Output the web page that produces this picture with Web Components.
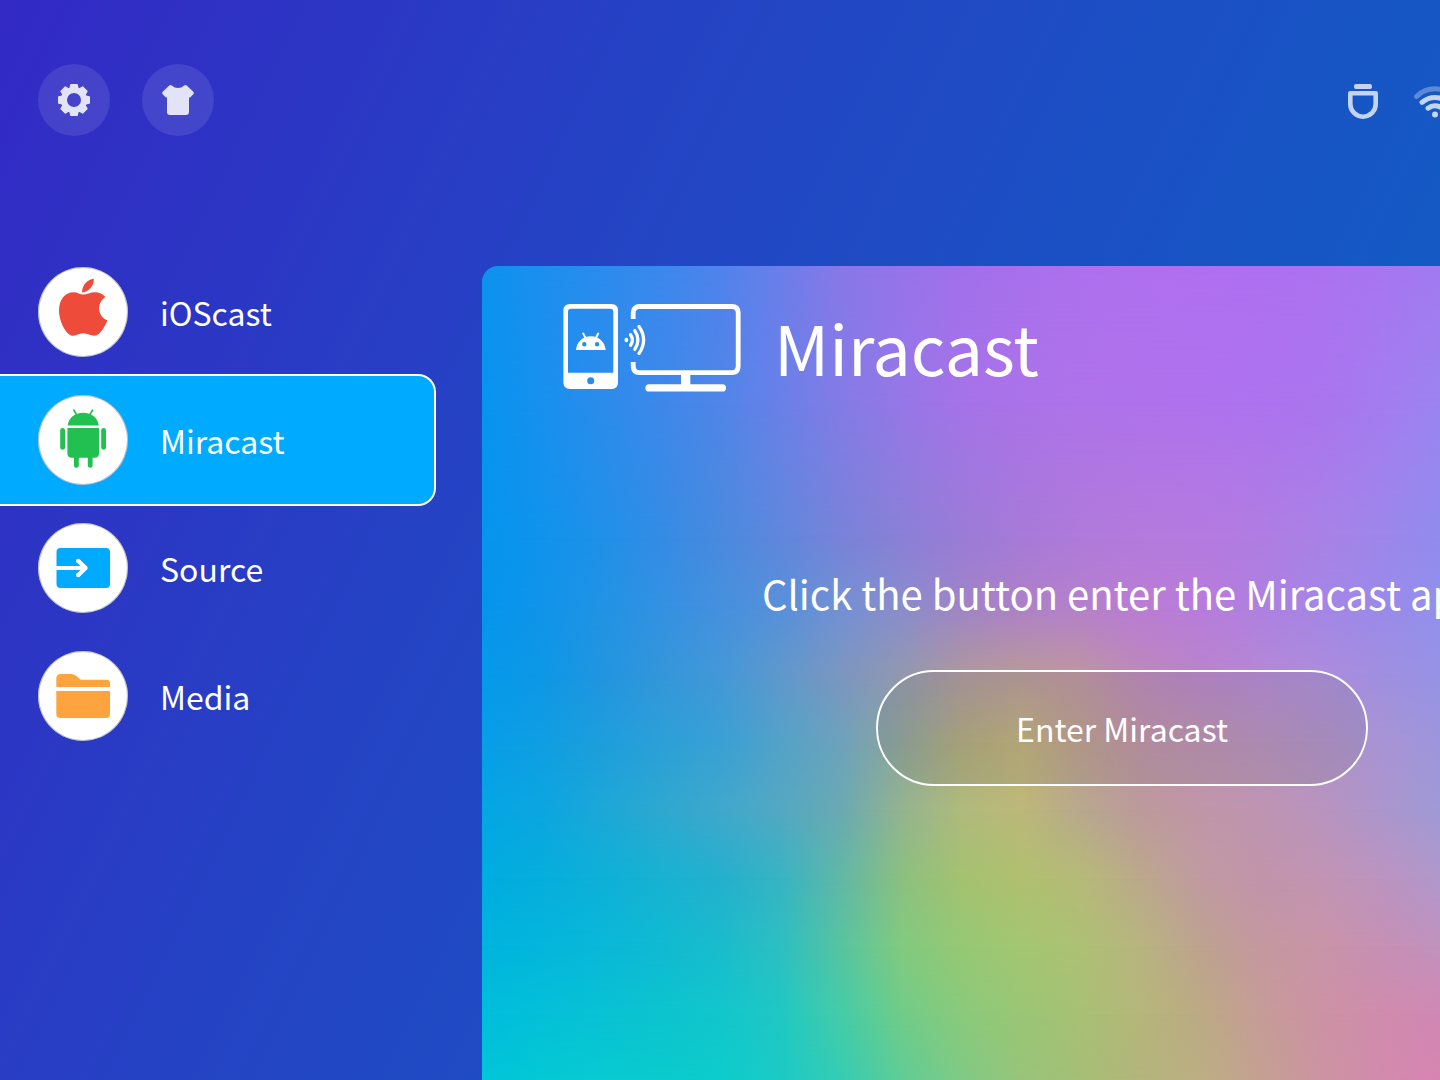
<!DOCTYPE html>
<html lang="en">
<head>
<meta charset="utf-8">
<meta name="viewport" content="width=device-width, initial-scale=1">
<title>Miracast</title>
<style>
  html, body {
    margin: 0;
    min-height: 100%;
  }
  body {
    font-family: "Noto Sans CJK SC", "Noto Sans", sans-serif;
    color: #fff;
    background: #3329c5;
    overflow: hidden;
  }
</style>
</head>
<body>

<cast-home>
  <round-button slot="tools" icon="gear" label="Settings"></round-button>
  <round-button slot="tools" icon="shirt" label="Themes"></round-button>

  <cast-icon slot="status" name="usb"></cast-icon>
  <cast-icon slot="status" name="wifi"></cast-icon>

  <menu-item slot="menu" icon="apple">iOScast</menu-item>
  <menu-item slot="menu" icon="android" selected>Miracast</menu-item>
  <menu-item slot="menu" icon="source">Source</menu-item>
  <menu-item slot="menu" icon="folder">Media</menu-item>

  <cast-panel heading="Miracast" action="Enter Miracast">Click the button enter the Miracast app</cast-panel>
</cast-home>

<script>
(function castHome(){
  'use strict';

  const icons = {
    gear: {
      width: 36, height: 36,
      body: `
        <g opacity=".85">
          <circle cx="18" cy="18" r="10" fill="none" stroke="#fff" stroke-width="6"/>
          <g fill="#fff">
            ${[0, 45, 90, 135, 180, 225, 270, 315].map(a =>
              `<path d="M13.2 7 14.2 2.6Q14.4 2 15 2H21Q21.600 2 21.800 2.600L22.800 7Z" transform="rotate(${a} 18 18)"/>`).join('')}
          </g>
        </g>`
    },
    shirt: {
      width: 36, height: 36,
      body: `<path fill="#fff" fill-opacity=".85" d="M9.3 3.4Q10.4 2.4 11.8 3.4Q14.5 6 18 6T24.2 3.4Q25.6 2.4 26.7 3.4L33.3 9.8Q34.5 11 33.3 12.2L30.6 14.9Q30 15.5 29 15.4V30Q29 33 26 33H10Q7 33 7 30V15.4Q6 15.5 5.4 14.9L2.7 12.2Q1.5 11 2.7 9.8Z"/>`
    },
    usb: {
      width: 38, height: 40,
      body: `
        <g opacity=".75">
          <rect x="10" y="4" width="18" height="5" rx="2" fill="#fff"/>
          <path d="M6.3 13.2H31.7V24a12.7 12.7 0 0 1-25.4 0Z" fill="none" stroke="#fff" stroke-width="4.6" stroke-linejoin="round"/>
        </g>`
    },
    wifi: {
      width: 44, height: 40,
      body: `
        <g fill="none" stroke="#fff" stroke-width="5" stroke-linecap="round">
          <path d="M2.6 16.4A26 26 0 0 1 39.4 16.4" opacity=".3"/>
          <g opacity=".75">
            <path d="M8 22.4A19.5 19.5 0 0 1 34 22.4"/>
            <path d="M14 28.2A11 11 0 0 1 28 28.2"/>
          </g>
        </g>
        <circle cx="21" cy="34.4" r="3" fill="#fff" opacity=".75"/>`
    },
    apple: {
      width: 90, height: 90,
      body: `
        <g fill="#ee4b3b">
          <path d="M44 25.4C44.2 18 49 12.6 55.8 11.7C56 18.5 51.5 24.5 44 25.4Z"/>
          <path d="M45 27.6C49 27.6 52 25.2 57 25.2C61 25.2 65 27 67.4 30C58.5 35.5 59.2 49.5 69.4 53.3C66.8 60 62.5 66.6 58.5 68.3C54 70 50.5 66.3 45.3 66.3C40 66.3 37 69.9 33 68.4C26.5 65.6 21 53 21 43.5C21 32 27.5 25.2 35.5 25.2C39.5 25.2 42.3 27.6 45 27.6Z"/>
        </g>`
    },
    android: {
      width: 90, height: 90,
      body: `
        <g fill="#22c050">
          <path d="M29.7 30.4C30.5 22.8 37 17.7 45.2 17.7S60 22.8 60.7 30.4Z"/>
          <path d="M29.4 33H61V58.2Q61 62.7 56.5 62.7H33.9Q29.4 62.7 29.4 58.2Z"/>
          <rect x="22.2" y="33" width="4.8" height="21.8" rx="2.4"/>
          <rect x="63.2" y="33" width="4.8" height="21.8" rx="2.4"/>
          <rect x="36" y="58" width="4.8" height="14.7" rx="2.2"/>
          <rect x="49.8" y="58" width="4.8" height="14.7" rx="2.2"/>
        </g>
        <path d="M35.8 15 38.4 19.5M54.6 15 52 19.5" stroke="#22c050" stroke-width="1.6" stroke-linecap="round"/>`
    },
    source: {
      width: 90, height: 90,
      body: `
        <rect x="18.5" y="25" width="53.5" height="40" rx="4" fill="#0af"/>
        <path d="M17 45H47M40.3 38 47.6 45 40.3 52" fill="none" stroke="#fff" stroke-width="4.2" stroke-linejoin="round"/>
        <circle cx="40.3" cy="38" r="2.3" fill="#fff"/>
        <circle cx="40.3" cy="52" r="2.3" fill="#fff"/>`
    },
    folder: {
      width: 90, height: 90,
      body: `
        <g fill="#ffa33f">
          <path d="M18.3 36V27.5Q18.3 23 22.8 23H33.5Q36.5 23 39 25.5L41.3 27.7Q42.3 28.7 44 28.7H68.5Q72 28.7 72 32.2V36Z"/>
          <path d="M18.3 40H72V63Q72 67 68 67H22.3Q18.3 67 18.3 63Z"/>
        </g>`
    },
    devices: {
      width: 180, height: 90,
      body: `
        <g fill="#fff" fill-rule="evenodd">
          <path d="M8 2H49.5Q56 2 56 8.5V80.5Q56 87 49.5 87H8Q1.4 87 1.4 80.5V8.5Q1.4 2 8 2ZM9 6.7Q6 6.7 6 9.7V70.7H51.3V9.7Q51.3 6.7 48.3 6.7ZM28.7 75.2a3.5 3.5 0 1 0 0 7a3.5 3.5 0 1 0 0-7Z"/>
          <path d="M14 48C14.6 40 20.5 34.2 28.8 34.2S43 40 43.7 48ZM22.3 40a2.2 2.2 0 1 0 0 4.4a2.2 2.2 0 1 0 0-4.4ZM35.1 40a2.2 2.2 0 1 0 0 4.4a2.2 2.2 0 1 0 0-4.4Z"/>
          <ellipse cx="64.4" cy="38" rx="1.9" ry="2.3"/>
          <rect x="119" y="72" width="9.3" height="11"/>
          <rect x="83.4" y="82.3" width="80.6" height="7.2" rx="3.6"/>
        </g>
        <g fill="none" stroke="#fff" stroke-linecap="round">
          <path d="M21.2 31.6 23.6 36M36.2 31.6 33.8 36" stroke-width="2"/>
          <path d="M68.6 32.7Q72.2 38 68.6 43.3M72.8 28.6Q79 38 72.8 47.4M77 24.5Q86.2 38 77 51.5" stroke-width="3.3"/>
        </g>
        <path d="M71.2 17V11Q71.2 4.5 77.7 4.5H169.7Q176.2 4.5 176.2 11V64Q176.2 70.6 169.7 70.6H77.7Q71.2 70.6 71.2 64V60" fill="none" stroke="#fff" stroke-width="4.8"/>`
    }
  };

  // colours of the panel backdrop: y of the row, then one colour every 60px
  const meshStep = 60;
  const meshRows = [
    [0,   '#0c92f0 #1c8fef #2b8cee #3c88ed #5083ec #6c7eea #8878e8 #9674ea #a170eb #a970ed #ae70ee #b070ef #b06ff0 #ae70f0 #ac72f0 #a876f0 #a27af0'],
    [136, '#0794f0 #1890ee #2b8cec #3e88ea #5185e8 #6a80e8 #847be6 #9677e7 #a573e8 #ab72e9 #ae72ea #af72ec #af72ee #ad73ee #aa75ee #a47cf0 #9b84f0'],
    [272, '#0595ee #1093ec #2090e8 #348ce4 #4a8ade #6087dc #7883d8 #8a80d6 #9a7cd6 #a77ad8 #b07ada #b47adc #b47adf #af7de2 #a982e6 #9d87ea #918cee'],
    [340, '#0595ec #1094ea #2193e4 #3491e2 #4690de #5890da #7490d4 #8a8ccc #a084c6 #ae80c8 #b480cc #ba7cd4 #b87cdc #ae80e0 #a486e6 #9a8aea #9290ec'],
    [408, '#0699ea #0e97e6 #2195e0 #3496da #4498d8 #6098cc #7c96c0 #9298b0 #ae989e #b89a9a #be94a2 #bc88bc #b984cc #b488d6 #ac8cdc #a08fe0 #9693e6'],
    [476, '#069ee8 #109ee2 #1e9edc #2ca0d8 #3aa0d4 #54a2c8 #6ea2bc #90a498 #b0aa7c #c0b078 #be9e8e #be92a6 #bc90b2 #b890be #b090c8 #a894d4 #9c96dc'],
    [544, '#04a6e4 #0ca6e0 #1ca8d8 #2ea8d0 #40a8cc #54a8c2 #6aaab2 #94b490 #b0ba7c #bcb878 #b8a88e #bc9a9c #c096a8 #be95b2 #b894be #ac96cc #9f9ad6'],
    [612, '#00acdf #06aedc #0eb0d8 #18b2d2 #24b0ce #38b4c2 #62b8a6 #8cc080 #a4c270 #b0c070 #b6ba78 #bca88c #c09aa2 #c294aa #c294b4 #bc94c0 #b098cc'],
    [680, '#00b4de #04b6dc #0ab8d8 #10bad2 #1abccc #2ebfc2 #58c4a0 #82ca80 #96c874 #a4c672 #aec074 #b8b480 #bea290 #c498a0 #c894a8 #c690b4 #c092be'],
    [748, '#00bedc #04c0d8 #08c2d4 #0cc4ce #12c6cc #20c8c4 #46cca8 #70cc88 #8aca7c #9ac674 #a8c074 #b6b67a #bcaa84 #c69c98 #cc92a4 #d08cac #d088b4'],
    [814, '#00c4d8 #04c8d4 #08cad2 #0acacc #0ecccc #1ccac4 #36ccb4 #60cc96 #80ca84 #98c47a #a6be76 #b4b47c #bcae84 #c4a092 #cc94a2 #d28aac #d884b2']
  ];


  class CastIcon extends HTMLElement{

    constructor(){
      super();
      this.attachShadow({mode: 'open'});
    }

    connectedCallback(){
      const icon = icons[this.getAttribute('name')];
      this.shadowRoot.innerHTML = `
        <style>
          :host { display: block; flex: none; }
          svg { display: block; }
        </style>
        <svg width="${icon.width}" height="${icon.height}" viewBox="0 0 ${icon.width} ${icon.height}" aria-hidden="true">${icon.body}</svg>
      `;
    }
  }


  class RoundButton extends HTMLElement{

    constructor(){
      super();
      this.attachShadow({mode: 'open'});
    }

    connectedCallback(){
      this.shadowRoot.innerHTML = `
        <style>
          :host { display: block; }
          button {
            display: flex;
            align-items: center;
            justify-content: center;
            width: 72px;
            height: 72px;
            padding: 0;
            border: 0;
            border-radius: 50%;
            background: rgba(255, 255, 255, .1);
            cursor: pointer;
          }
          button:hover { background: rgba(255, 255, 255, .2); }
        </style>
        <button type="button" aria-label="${this.getAttribute('label')}">
          <cast-icon name="${this.getAttribute('icon')}"></cast-icon>
        </button>
      `;
    }
  }


  class MenuItem extends HTMLElement{

    constructor(){
      super();
      this.attachShadow({mode: 'open'});
    }

    connectedCallback(){
      this.shadowRoot.innerHTML = `
        <style>
          :host { display: block; }
          button {
            display: flex;
            align-items: center;
            gap: 32px;
            width: 100%;
            height: 128px;
            padding: 0 38px;
            border: 0;
            border-radius: 0 16px 16px 0;
            background: none;
            color: inherit;
            font: inherit;
            font-size: 32px;
            text-align: left;
            cursor: pointer;
          }
          :host([selected]) button {
            background: #0af;
            box-shadow: 0 0 0 2px #fff;
          }
          .disc {
            border-radius: 50%;
            background: #fff;
            box-shadow: inset 0 0 0 1px rgba(90, 90, 130, .4);
          }
        </style>
        <button type="button">
          <cast-icon class="disc" name="${this.getAttribute('icon')}"></cast-icon>
          <slot></slot>
        </button>
      `;
    }
  }


  // rows of horizontal gradients, each one faded into the row above it
  class MeshBackdrop extends HTMLElement{

    constructor(){
      super();
      const shadowRoot = this.attachShadow({mode: 'open'});
      shadowRoot.innerHTML = `
        <style>
          :host { display: grid; }
          div { grid-area: 1 / 1; }
        </style>
      `;

      meshRows.forEach(([top, colors], i) => {
        const row = document.createElement('div');
        const stops = colors.split(' ').map((color, n) => `${color} ${n * meshStep}px`);
        row.style.background = `linear-gradient(to right, ${stops.join(', ')})`;
        if(i > 0){
          row.style.maskImage = `linear-gradient(transparent ${meshRows[i - 1][0]}px, #000 ${top}px)`;
        }
        shadowRoot.appendChild(row);
      });
    }
  }


  class CastPanel extends HTMLElement{

    constructor(){
      super();
      this.attachShadow({mode: 'open'});
    }

    connectedCallback(){
      this.shadowRoot.innerHTML = `
        <style>
          :host {
            display: grid;
            overflow: hidden;
            border-radius: 16px 16px 0 0;
          }
          mesh-backdrop, section { grid-area: 1 / 1; }
          section {
            z-index: 1;
            display: flex;
            flex-direction: column;
            align-items: center;
            padding: 36px 80px;
          }
          header {
            display: flex;
            align-items: center;
            align-self: flex-start;
            gap: 32px;
            margin-bottom: 172px;
          }
          h1 {
            margin: 0;
            font-size: 68px;
            line-height: 90px;
            font-weight: 400;
          }
          p {
            margin: 0 0 48px;
            font-size: 40px;
            line-height: 58px;
            white-space: nowrap;
          }
          button {
            width: 492px;
            height: 116px;
            border: 2px solid #fff;
            border-radius: 58px;
            background: rgba(110, 110, 110, .15);
            color: inherit;
            font: inherit;
            font-size: 32px;
            cursor: pointer;
          }
        </style>
        <mesh-backdrop></mesh-backdrop>
        <section>
          <header>
            <cast-icon name="devices"></cast-icon>
            <h1>${this.getAttribute('heading')}</h1>
          </header>
          <p><slot></slot></p>
          <button type="button">${this.getAttribute('action')}</button>
        </section>
      `;
    }
  }


  class CastHome extends HTMLElement{

    constructor(){
      super();
      const shadowRoot = this.attachShadow({mode: 'open'});
      shadowRoot.innerHTML = `
        <style>
          :host {
            display: flex;
            flex-direction: column;
            min-height: 100vh;
            background: linear-gradient(116deg, #3329c5, #2444c4 37%, #1459c4 79%, #1060c4);
          }
          .bar {
            display: flex;
            justify-content: space-between;
            min-width: 1762px;
            padding: 64px 0 112px 38px;
          }
          .tools, .status {
            display: flex;
            align-items: center;
            gap: 32px;
          }
          .status { flex: 0 0 456px; }
          .content {
            display: flex;
            flex: 1;
            min-width: 1800px;
          }
          nav {
            flex: 0 0 434px;
            margin-right: 48px;
          }
          main {
            display: grid;
            flex: 1;
            margin-top: 18px;
            margin-right: 38px;
          }
        </style>
        <div class="bar">
          <div class="tools"><slot name="tools"></slot></div>
          <div class="status"><slot name="status"></slot></div>
        </div>
        <div class="content">
          <nav><slot name="menu"></slot></nav>
          <main><slot></slot></main>
        </div>
      `;
    }
  }

  customElements.define('cast-icon', CastIcon);
  customElements.define('round-button', RoundButton);
  customElements.define('menu-item', MenuItem);
  customElements.define('mesh-backdrop', MeshBackdrop);
  customElements.define('cast-panel', CastPanel);
  customElements.define('cast-home', CastHome);

})();
</script>
</body>
</html>
